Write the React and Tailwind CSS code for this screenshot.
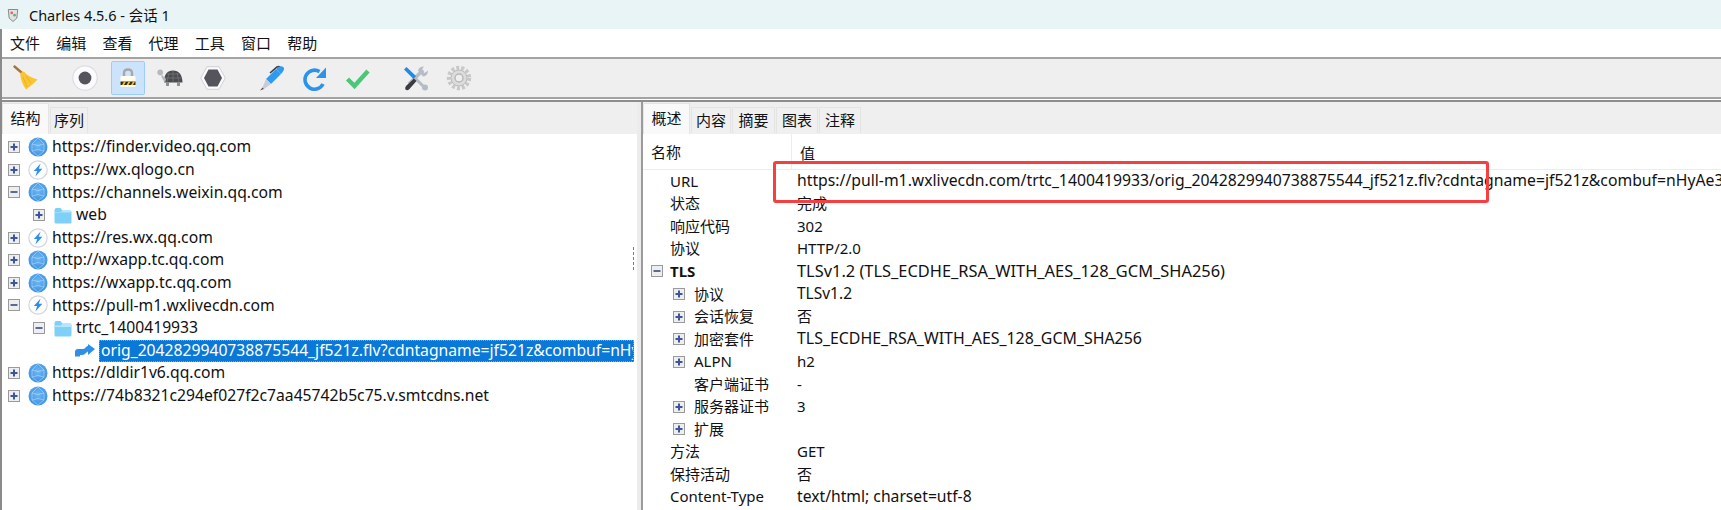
import React from 'react';

const menus = ['文件', '编辑', '查看', '代理', '工具', '窗口', '帮助'];

const URL_TEXT =
  'https://pull-m1.wxlivecdn.com/trtc_1400419933/orig_2042829940738875544_jf521z.flv?cdntagname=jf521z&combuf=nHyAe3';

const hosts = [
  { depth: 0, box: 'plus', icon: 'globe', label: 'https://finder.video.qq.com' },
  { depth: 0, box: 'plus', icon: 'bolt', label: 'https://wx.qlogo.cn' },
  { depth: 0, box: 'minus', icon: 'globe', label: 'https://channels.weixin.qq.com' },
  { depth: 1, box: 'plus', icon: 'folder', label: 'web' },
  { depth: 0, box: 'plus', icon: 'bolt', label: 'https://res.wx.qq.com' },
  { depth: 0, box: 'plus', icon: 'globe', label: 'http://wxapp.tc.qq.com' },
  { depth: 0, box: 'plus', icon: 'globe', label: 'https://wxapp.tc.qq.com' },
  { depth: 0, box: 'minus', icon: 'bolt', label: 'https://pull-m1.wxlivecdn.com' },
  { depth: 1, box: 'minus', icon: 'folder', label: 'trtc_1400419933' },
  { depth: 2, icon: 'redirect', selected: true, label: 'orig_2042829940738875544_jf521z.flv?cdntagname=jf521z&combuf=nHyAe3' },
  { depth: 0, box: 'plus', icon: 'globe', label: 'https://dldir1v6.qq.com' },
  { depth: 0, box: 'plus', icon: 'globe', label: 'https://74b8321c294ef027f2c7aa45742b5c75.v.smtcdns.net' },
];

const details = [
  { name: 'URL', value: URL_TEXT, size: 'text-[15.76px]' },
  { name: '状态', value: '完成' },
  { name: '响应代码', value: '302' },
  { name: '协议', value: 'HTTP/2.0' },
  { name: 'TLS', value: 'TLSv1.2 (TLS_ECDHE_RSA_WITH_AES_128_GCM_SHA256)', box: 'minus', bold: true, size: 'text-[16.4px]' },
  { name: '协议', value: 'TLSv1.2', box: 'plus', sub: true, size: 'text-[15.5px]' },
  { name: '会话恢复', value: '否', box: 'plus', sub: true },
  { name: '加密套件', value: 'TLS_ECDHE_RSA_WITH_AES_128_GCM_SHA256', box: 'plus', sub: true, size: 'text-[15.9px]' },
  { name: 'ALPN', value: 'h2', box: 'plus', sub: true },
  { name: '客户端证书', value: '-', sub: true },
  { name: '服务器证书', value: '3', box: 'plus', sub: true },
  { name: '扩展', value: '', box: 'plus', sub: true },
  { name: '方法', value: 'GET' },
  { name: '保持活动', value: '否' },
  { name: 'Content-Type', value: 'text/html; charset=utf-8', size: 'text-[15.7px]' },
];

function TreeBox({ type }) {
  return (
    <svg width="12" height="12" viewBox="0 0 12 12" className="shrink-0">
      <rect x="0.5" y="0.5" width="11" height="11" fill="#eceef2" stroke="#9a9a9a" />
      <rect x="2.5" y="5" width="7" height="2" fill={type === 'plus' ? '#3f5597' : '#5c6a92'} />
      {type === 'plus' && <rect x="5" y="2.5" width="2" height="7" fill="#3f5597" />}
    </svg>
  );
}

function GlobeIcon() {
  return (
    <svg width="20" height="20" viewBox="0 0 20 20" className="shrink-0">
      <defs>
        <radialGradient id="globeFill" cx="50%" cy="42%" r="62%">
          <stop offset="0%" stopColor="#6db8f3" />
          <stop offset="100%" stopColor="#3a8fe4" />
        </radialGradient>
      </defs>
      <circle cx="10" cy="10" r="9.5" fill="url(#globeFill)" />
      <g fill="none" stroke="#ffffff" strokeWidth="0.6" opacity="0.6">
        <path d="M10 1 L4 7 L4 14 L10 19 L16 14 L16 7 Z" />
        <path d="M4 7 Q10 10 16 7 M4 14 Q10 11 16 14" />
      </g>
    </svg>
  );
}

function BoltIcon() {
  return (
    <svg width="20" height="20" viewBox="0 0 20 20" className="shrink-0">
      <circle cx="10" cy="10" r="9.2" fill="#fdfdfd" stroke="#d4d6da" strokeWidth="1.2" />
      <path d="M12.6 3.6 L5.8 11 H9.2 L7.4 16.4 L14.4 8.8 H10.8 Z" fill="#2f8fe8" />
    </svg>
  );
}

function FolderIcon({ open }) {
  return (
    <svg width="18" height="17" viewBox="0 0 18 17" className="shrink-0">
      <path d="M0.5 3 Q0.5 1 2.5 1 H6.5 L8.5 3.5 H16 Q17.5 3.5 17.5 5 V15 Q17.5 16.5 16 16.5 H2 Q0.5 16.5 0.5 15 Z" fill="#7ed0f8" />
      <path d={open ? 'M0.5 7 H17.5 V5 Q17.5 3.5 16 3.5 H8.5 L7 5.5 H0.5 Z' : 'M0.5 5 H7 L8.5 3.5 H16 Q17.5 3.5 17.5 5 V5.6 H0.5 Z'} fill="#b4e6fc" />
    </svg>
  );
}

function RedirectIcon() {
  return (
    <svg width="20" height="13" viewBox="0 0 20 13" className="shrink-0">
      <path d="M0 12.5 V8 Q0 5 3 5 H8 Q10 5 11 3 Q12 2 13 2 V0 L20 5 L13 11 V7.5 Q12 7.5 11 9 Q9.5 11 7 11 H5 V12.5 Z" fill="#2f8fe8" />
    </svg>
  );
}

function NodeIcon({ icon, open }) {
  if (icon === 'globe') return <GlobeIcon />;
  if (icon === 'bolt') return <BoltIcon />;
  if (icon === 'folder') return <FolderIcon open={open} />;
  return <RedirectIcon />;
}

function BroomIcon() {
  return (
    <svg width="26" height="26" viewBox="0 0 26 26">
      <path d="M1.5 1.5 L9 8" stroke="#a9743c" strokeWidth="2.4" strokeLinecap="round" />
      <path d="M7 8 L11 6.5 Q15 12 24.5 14.5 L20 19 L13 24.5 Q8 18 7 8 Z" fill="#fbc531" />
      <path d="M10 12 L14 22 M13 11 L18 18" stroke="#eaa922" strokeWidth="0.8" />
    </svg>
  );
}

function RecordIcon() {
  return (
    <svg width="26" height="26" viewBox="0 0 26 26">
      <circle cx="13" cy="13" r="12.2" fill="#fbfbfd" stroke="#dcdde3" strokeWidth="1.2" />
      <circle cx="13" cy="13" r="6.4" fill="#54555c" />
    </svg>
  );
}

function LockIcon() {
  return (
    <svg width="16" height="20" viewBox="0 0 16 20">
      <path d="M4 9 V5 Q4 1.5 8 1.5 Q12 1.5 12 5 V9" fill="none" stroke="#a7a7a9" strokeWidth="2.4" />
      <rect x="0.5" y="8" width="15" height="11" rx="1" fill="#fffdee" />
      <rect x="0.5" y="13.5" width="15" height="3.5" fill="#2a2a2a" />
      <path d="M2 17 L4 13.5 H6 L4 17 Z M6.5 17 L8.5 13.5 H10.5 L8.5 17 Z M11 17 L13 13.5 H15 L13 17 Z" fill="#f5c21d" />
    </svg>
  );
}

function TurtleIcon() {
  return (
    <svg width="26" height="18" viewBox="0 0 26 18">
      <path d="M7 13.5 Q7 1.5 16 1.5 Q25 1.5 25.5 13.5 Z" fill="#4b4c50" />
      <path d="M10 13 L12 4 M16 13 V2 M22 13 L20 4 M8 9 H24 M10 5 H22" stroke="#77787c" strokeWidth="0.7" />
      <circle cx="3.2" cy="3.4" r="2.8" fill="#b6b8bc" />
      <path d="M4 5 L9 10 L8 14 L5 9 Z" fill="#b6b8bc" />
      <rect x="9" y="13" width="3" height="4" fill="#8f9094" />
      <rect x="20" y="13" width="3" height="4" fill="#8f9094" />
    </svg>
  );
}

function StopIcon() {
  return (
    <svg width="26" height="24" viewBox="0 0 26 24">
      <path d="M7 0.7 H19 L25.3 12 L19 23.3 H7 L0.7 12 Z" fill="#fbfbfd" stroke="#cfd0d6" strokeWidth="1" />
      <path d="M8.5 3.5 H17.5 L22 12 L17.5 20.5 H8.5 L4 12 Z" fill="#54555c" />
    </svg>
  );
}

function PenIcon() {
  return (
    <svg width="26" height="26" viewBox="0 0 26 26">
      <path d="M7 14 L17 4 L22 9 L12 19 Z" fill="#2f9bf0" />
      <path d="M7 14 L12 19 L5 24 L3.5 22.5 Z" fill="#c8ccd6" />
      <path d="M3.5 22.5 L1 25.5 L5 24 Z" fill="#55565c" />
      <path d="M11 8 L18 2 Q20 1 21 2" fill="none" stroke="#3a3b40" strokeWidth="1.6" />
      <path d="M20 1.5 Q24 0.5 25 3 Q25.5 5 22 9 L17 4 Z" fill="#2f9bf0" />
    </svg>
  );
}

function RefreshIcon() {
  return (
    <svg width="24" height="25" viewBox="0 0 24 25">
      <path d="M20 18 A9.5 9.5 0 1 1 16.5 5.6" fill="none" stroke="#2b93ec" strokeWidth="3.6" />
      <path d="M13 12 L23 1.5 V12 Z" fill="#2b93ec" />
    </svg>
  );
}

function CheckIcon() {
  return (
    <svg width="25" height="21" viewBox="0 0 25 21">
      <path d="M2.5 11 L9.5 18 L23 3" fill="none" stroke="#4cc679" strokeWidth="4.4" />
    </svg>
  );
}

function ToolsIcon() {
  return (
    <svg width="26" height="25" viewBox="0 0 26 25">
      <path d="M6 18 L20 4" stroke="#b6bcc6" strokeWidth="3.6" />
      <path d="M15 4.5 Q16 0.5 21 0.5 L18.5 4 L21.5 7 L25 4.5 Q25 10 20 10.5 Z" fill="#b6bcc6" />
      <circle cx="22" cy="21.5" r="3" fill="#b6bcc6" />
      <path d="M12 12 L21 21" stroke="#b6bcc6" strokeWidth="3" />
      <path d="M1 3.5 L3.5 1 L13 10 L10.5 13 Z" fill="#1f8be8" />
      <path d="M3 20 L11 12.5 L13.5 15 L6 23.5 Q4 25 2.5 23.5 Q1.5 22 3 20 Z" fill="#3b3c41" />
    </svg>
  );
}

function GearIcon() {
  return (
    <svg width="26" height="26" viewBox="0 0 26 26">
      <circle cx="13" cy="13" r="10.2" fill="none" stroke="#c8c8c8" strokeWidth="4" strokeDasharray="3 2" />
      <circle cx="13" cy="13" r="8" fill="#dcdcdc" stroke="#bcbcbc" strokeWidth="1" />
      <circle cx="13" cy="13" r="4" fill="#efefef" stroke="#b8b8b8" strokeWidth="1.5" />
    </svg>
  );
}

function ToolSlot({ children, active, className = '' }) {
  return (
    <div className={`flex h-[34px] w-[42.6px] items-center justify-center ${className}`}>
      {active ? (
        <div className="flex h-[34px] w-[34px] items-center justify-center rounded-[2px] border border-[#99ccff] bg-[#cce4fb]">
          {children}
        </div>
      ) : (
        children
      )}
    </div>
  );
}

function Tab({ label, active, className = '' }) {
  return active ? (
    <div className={`z-10 flex h-[31px] items-center justify-center border border-b-0 border-[#e4e4e4] bg-[#f9f9f9] pb-[2px] ${className}`}>
      {label}
    </div>
  ) : (
    <div className={`flex h-[26px] items-center justify-center border border-b-0 border-[#e4e4e4] bg-[#f0f0f0] ${className}`}>
      {label}
    </div>
  );
}

function TreeRow({ row }) {
  const padding = ['pl-[6px]', 'pl-[31px]', 'pl-[73px]'][row.depth];
  return (
    <div className={`flex h-[22.6px] items-center text-[15.7px] ${padding}`}>
      {row.box && <TreeBox type={row.box} />}
      <div className={`flex items-center ${row.depth === 1 ? 'ml-[9px]' : row.depth === 0 ? 'ml-[8px]' : ''}`}>
        <NodeIcon icon={row.icon} open={row.box === 'minus'} />
      </div>
      {row.selected ? (
        <span className="ml-[4px] flex h-[22px] min-w-0 flex-1 items-center overflow-hidden border border-dotted border-[#f08a2c] bg-[#0a78d7] pl-[1px] whitespace-nowrap text-white">
          {row.label}
        </span>
      ) : (
        <span className="ml-[4px] whitespace-nowrap">{row.label}</span>
      )}
    </div>
  );
}

function DetailRow({ row }) {
  const padding = row.sub ? (row.box ? 'pl-[30px]' : 'pl-[51px]') : row.box ? 'pl-[8px]' : 'pl-[27px]';
  return (
    <div className="flex h-[22.55px] items-center">
      <div className={`flex w-[154px] shrink-0 items-center ${padding}`}>
        {row.box && <TreeBox type={row.box} />}
        <span className={`${row.bold ? 'ml-[7px] font-bold' : row.box ? 'ml-[9px]' : ''} whitespace-nowrap`}>{row.name}</span>
      </div>
      <span className={`whitespace-nowrap ${row.size || ''}`}>{row.value}</span>
    </div>
  );
}

export default function App() {
  return (
    <div className="h-[510px] w-[1721px] overflow-hidden bg-white font-['Noto_Sans','Noto_Sans_CJK_SC',sans-serif] text-[15px] leading-none text-[#111]">
      <div className="flex h-[29px] items-center bg-[#e9f4f7] pt-[1px] pl-[7px] text-[14.5px]">
        <svg width="12" height="15" viewBox="0 0 14 16" className="mr-[10px] shrink-0">
          <path d="M1.5 1 H12.5 L11.5 11 L7 15 L2.5 11 Z" fill="#e2e2de" stroke="#77787a" strokeWidth="1" />
          <circle cx="5.5" cy="5" r="1.6" fill="#d9696b" />
          <circle cx="8.8" cy="7.6" r="1.6" fill="#6ea88c" />
        </svg>
        Charles 4.5.6 - 会话 1
      </div>

      <div className="flex h-[481px] flex-col border-l-2 border-[#8a8a8a]">
        <div className="flex h-[28px] shrink-0 items-center gap-[16.2px] pt-[1px] pl-[8px]">
          {menus.map((m) => (
            <span key={m}>{m}</span>
          ))}
        </div>

        <div className="flex h-[42px] shrink-0 items-center border-y-2 border-[#a3a3a3] bg-[#efefef] pl-[3px]">
          <ToolSlot><BroomIcon /></ToolSlot>
          <ToolSlot className="ml-[16.4px]"><RecordIcon /></ToolSlot>
          <ToolSlot active><LockIcon /></ToolSlot>
          <ToolSlot><TurtleIcon /></ToolSlot>
          <ToolSlot><StopIcon /></ToolSlot>
          <ToolSlot className="ml-[16.4px]"><PenIcon /></ToolSlot>
          <ToolSlot><RefreshIcon /></ToolSlot>
          <ToolSlot><CheckIcon /></ToolSlot>
          <ToolSlot className="ml-[16.4px]"><ToolsIcon /></ToolSlot>
          <ToolSlot><GearIcon /></ToolSlot>
        </div>

        <div className="h-[1px] shrink-0 bg-white" />

        <div className="flex min-h-0 flex-1 border-t-[2px] border-[#8d8d8d]">
          <div className="relative flex w-[635px] shrink-0 flex-col">
            <div className="flex h-[32px] shrink-0 items-end bg-[#efefef]">
              <Tab label="结构" active className="w-[47px]" />
              <Tab label="序列" className="mb-[1px] ml-[1px] w-[38px]" />
            </div>
            <div className="min-h-0 flex-1 pt-[2px] pr-[3px]">
              {hosts.map((row) => (
                <TreeRow key={row.label} row={row} />
              ))}
            </div>
            <div className="absolute top-[145px] right-[3px] h-[23px] border-r border-dashed border-[#2f8fe8]" />
          </div>

          <div className="w-[4px] shrink-0 bg-[#ececec]" />
          <div className="w-[2px] shrink-0 bg-[#9b9b9b]" />

          <div className="relative flex min-w-0 flex-1 flex-col">
            <div className="flex h-[32px] shrink-0 items-end bg-[#efefef]">
              <Tab label="概述" active className="w-[47px]" />
              <Tab label="内容" className="mb-[1px] ml-[1px] w-[40px]" />
              <Tab label="摘要" className="mb-[1px] ml-[1px] w-[43px]" />
              <Tab label="图表" className="mb-[1px] ml-[1px] w-[42px]" />
              <Tab label="注释" className="mb-[1px] ml-[1px] w-[42px]" />
            </div>
            <div className="flex h-[36px] shrink-0 items-center border-b border-[#ececec]">
              <div className="flex h-full w-[149px] shrink-0 items-center border-r border-[#ececec] pt-[2px] pl-[8px]">名称</div>
              <span className="pt-[3px] pl-[8px]">值</span>
            </div>
            <div className="min-h-0 flex-1">
              {details.map((row, i) => (
                <DetailRow key={i} row={row} />
              ))}
            </div>
            <div className="absolute top-[59px] left-[130px] h-[42px] w-[716px] rounded-[3px] border-[3px] border-[#f63f3f]" />
          </div>
        </div>
      </div>
    </div>
  );
}
